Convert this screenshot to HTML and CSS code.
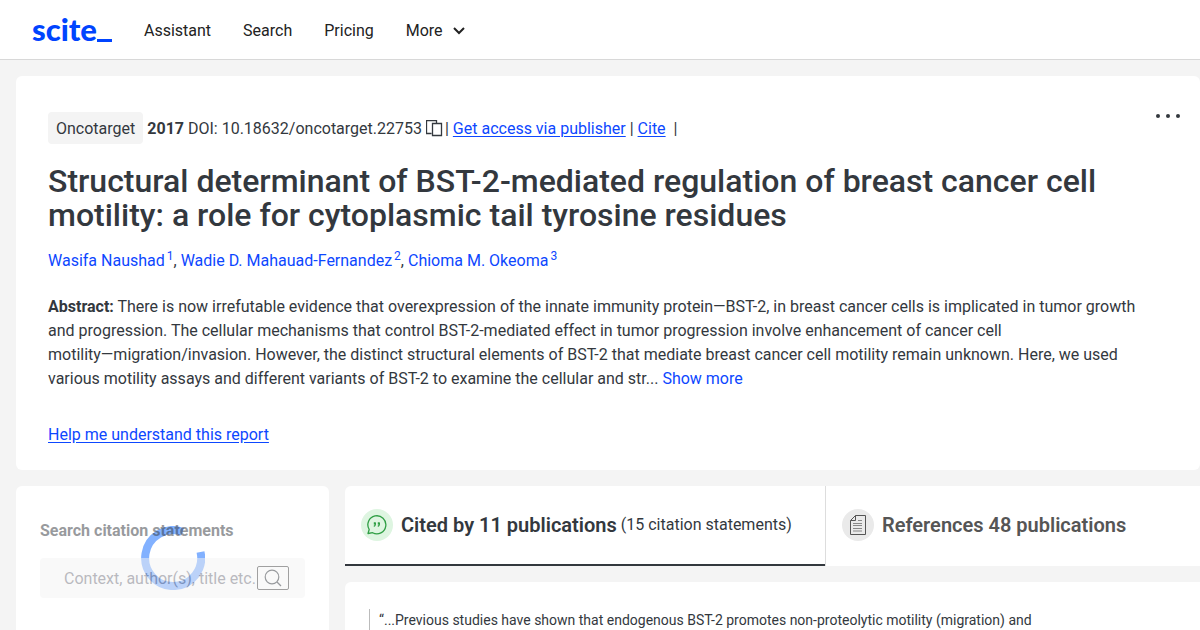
FILE: index.html
```html
<!DOCTYPE html>
<html lang="en">
<head>
  <meta charset="UTF-8">
  <meta name="viewport" content="width=device-width, initial-scale=1.0">
  <title>Structural determinant of BST-2-mediated regulation of breast cancer cell motility</title>
  <link rel="stylesheet" href="styles.css">
</head>
<body>

  <header class="header">
    <a class="logo" href="#">scite<span class="logo-bar"></span></a>
    <nav class="nav">
      <a href="#">Assistant</a>
      <a href="#">Search</a>
      <a href="#">Pricing</a>
      <button class="nav-more" type="button">
        More
        <svg width="12" height="8" viewBox="0 0 12 8" fill="none" stroke="currentColor" stroke-width="2"><path d="M1 1l5 5 5-5"/></svg>
      </button>
    </nav>
  </header>

  <main class="page">
    <section class="card paper">
      <button class="paper-menu" type="button" aria-label="More options">
        <svg width="24" height="4" viewBox="0 0 24 4" fill="currentColor"><circle cx="2" cy="2" r="2"/><circle cx="12" cy="2" r="2"/><circle cx="22" cy="2" r="2"/></svg>
      </button>

      <div class="meta">
        <span class="journal">Oncotarget</span>
        <span class="doi"><strong>2017</strong> DOI: 10.18632/oncotarget.22753</span>
        <button class="copy" type="button" aria-label="Copy DOI">
          <svg width="17" height="17" viewBox="0 0 17 17" fill="none" stroke="currentColor" stroke-width="1.3"><path d="M5.5 13.5h-5V.7h10v2M6.5 3.5h9v12h-9z"/></svg>
        </button>
        <span class="links">| <a href="#">Get access via publisher</a> | <a href="#">Cite</a></span>
        <span class="divider">|</span>
      </div>

      <h1 class="title">Structural determinant of BST-2-mediated regulation of breast cancer cell motility: a role for cytoplasmic tail tyrosine residues</h1>

      <div class="authors">
        <a href="#">Wasifa Naushad<sup>1</sup></a>, <a href="#">Wadie D. Mahauad-Fernandez<sup>2</sup></a>, <a href="#">Chioma M. Okeoma<sup>3</sup></a>
      </div>

      <p class="abstract"><strong>Abstract:</strong> There is now irrefutable evidence that overexpression of the innate immunity protein—BST-2, in breast cancer cells is implicated in tumor growth and progression. The cellular mechanisms that control BST-2-mediated effect in tumor progression involve enhancement of cancer cell <span class="nowrap">motility—migration/invasion.</span> However, the distinct structural elements of BST-2 that mediate breast cancer cell motility remain unknown. Here, we used various motility assays and different variants of BST-2 to examine the cellular and str... <a href="#">Show more</a></p>

      <a class="help" href="#">Help me understand this report</a>
    </section>

    <div class="columns">
      <aside class="card sidebar">
        <svg class="spinner" width="64" height="64" viewBox="0 0 64 64" fill="none" stroke="#82b1ff" stroke-width="8"><path d="M41.6 5.7A28 28 0 1 0 59.5 26"/></svg>
        <form class="search">
          <label for="search-input">Search citation statements</label>
          <div class="search-box">
            <input id="search-input" type="text" placeholder="Context, author(s), title etc.">
            <button type="button" aria-label="Search">
              <svg width="18" height="18" viewBox="0 0 18 18" fill="none" stroke="currentColor" stroke-width="1.2"><circle cx="8" cy="8" r="6.8"/><path d="M13 13l4 4"/></svg>
            </button>
          </div>
        </form>
      </aside>

      <div class="results">
        <div class="tabs">
          <button class="tab tab-active" type="button">
            <span class="tab-icon tab-icon-green">
              <svg width="20" height="20" viewBox="0 0 20 20" fill="none" stroke="currentColor" stroke-width="1.3">
                <path d="M1 18.5l1.2-4A9 9 0 1 1 5.6 17.7z" stroke-linejoin="round"/>
                <path d="M8.3 8v1.2q0 1.8-1.5 2.2M12.3 8v1.2q0 1.8-1.5 2.2"/>
                <path d="M6.8 7.2h2v2.2h-2zM10.8 7.2h2v2.2h-2z" fill="currentColor" stroke="none"/>
              </svg>
            </span>
            <span class="tab-title">Cited by 11 publications</span>
            <span class="tab-note">(15 citation statements)</span>
          </button>
          <button class="tab" type="button">
            <span class="tab-icon">
              <svg width="16" height="20" viewBox="0 0 16 20" fill="none" stroke="currentColor">
                <path d="M5.5.5h10v19H.5v-14zv5h-5"/>
                <path d="M8 5.5h4M3 8.5h9M3 10.5h9M3 13.5h9M3 16h9" stroke="#888"/>
              </svg>
            </span>
            <span class="tab-title">References 48 publications</span>
          </button>
        </div>

        <div class="statements">
          <blockquote class="quote">“...Previous studies have shown that endogenous BST-2 promotes non-proteolytic motility (migration) and</blockquote>
        </div>
      </div>
    </div>
  </main>

</body>
</html>
```
FILE: styles.css
```css
* {
  box-sizing: border-box;
}

body {
  display: flex;
  flex-direction: column;
  min-height: 100vh;
  margin: 0;
  background: #f4f4f4;
  color: #33383e;
  font-family: Roboto, "Liberation Sans", Arial, sans-serif;
  font-size: 16px;
  line-height: 24px;
}

button {
  padding: 0;
  border: 0;
  background: none;
  color: inherit;
  font: inherit;
  cursor: pointer;
}

a {
  color: #0d47ff;
  text-decoration: none;
}

svg {
  display: block;
}

.header {
  display: flex;
  align-items: center;
  gap: 32px;
  height: 60px;
  padding: 2px 32px 0;
  background: #fff;
  border-bottom: 1px solid #d8d8d8;
}

.logo {
  display: flex;
  align-items: flex-end;
  padding-bottom: 4px;
  color: #0044ff;
  font-family: Lato, sans-serif;
  font-size: 31px;
  font-weight: 900;
  line-height: 22px;
}

.logo-bar {
  width: 15px;
  height: 3px;
  margin-bottom: -2px;
  background: #0044ff;
}

.nav {
  display: flex;
  align-items: center;
  gap: 32px;
}

.nav a,
.nav-more {
  color: #222;
}

.nav-more {
  display: flex;
  align-items: center;
  gap: 10px;
}

.page {
  display: flex;
  flex: 1;
  flex-direction: column;
  padding: 16px 0 0 16px;
}

.card {
  background: #fff;
  border-radius: 6px;
}

.paper {
  position: relative;
  padding: 36px 32px 23px;
}

.paper-menu {
  position: absolute;
  top: 38px;
  right: 20px;
}

.meta {
  display: flex;
  align-items: center;
  height: 32px;
}

.journal,
.doi,
.links,
.divider {
  padding: 5px 0 3px;
}

.journal {
  margin-right: 4px;
  padding-left: 8px;
  padding-right: 8px;
  border-radius: 4px;
  background: #f4f4f4;
}

.copy {
  margin: 0 2px 0 4px;
}

.links {
  margin-right: 8px;
}

.links a,
.help {
  text-decoration: underline;
  text-underline-offset: 2px;
}

.title {
  margin: 20px 0 17px;
  font-size: 32px;
  font-weight: 500;
  line-height: 34px;
}

.authors sup {
  margin-left: 2px;
  font-size: 12px;
  line-height: 0;
}

.abstract {
  margin: 22px 0 32px;
  padding-right: 24px;
}

.nowrap {
  white-space: nowrap;
}

.help {
  display: inline-block;
}

.columns {
  display: flex;
  flex: 1;
  gap: 16px;
  margin-top: 16px;
}

.sidebar {
  position: relative;
  flex: 0 0 313px;
  min-width: 0;
  padding: 33px 24px 16px;
  border-radius: 6px 6px 0 0;
}

/* sits under the faded form while results load */
.spinner {
  position: absolute;
  top: 40px;
  left: 125px;
}

.search {
  position: relative;
  opacity: 0.5;
}

.search label {
  display: block;
  margin-bottom: 15px;
  font-weight: 700;
}

.search-box {
  display: flex;
  align-items: center;
  height: 40px;
  padding: 0 16px 0 24px;
  border-radius: 4px;
  background: #f4f4f4;
}

.search-box input {
  flex: 1;
  width: 0;
  min-width: 0;
  padding: 1px 0 0;
  border: 0;
  outline: 0;
  background: none;
  font: inherit;
}

.search-box input::placeholder {
  color: #757580;
}

.search-box button {
  display: flex;
  align-items: center;
  justify-content: center;
  width: 32px;
  height: 24px;
  border: 1px solid #444;
  border-radius: 2px;
}

.results {
  display: flex;
  flex: 1;
  flex-direction: column;
  min-width: 0;
}

.tabs {
  display: flex;
  height: 80px;
  border-radius: 6px 0 0 0;
  background: #fff;
}

.tab {
  display: flex;
  flex: 1;
  align-items: center;
  gap: 8px;
  padding: 0 16px 2px;
  border-left: 1px solid #ddd;
  color: #555;
  white-space: nowrap;
}

.tab-active {
  flex: 0 0 480px;
  padding-bottom: 0;
  border-bottom: 2px solid #33383e;
  border-left: 0;
  color: #33383e;
}

.tab-icon {
  display: flex;
  align-items: center;
  justify-content: center;
  width: 32px;
  height: 32px;
  border-radius: 50%;
  background: #eaeaea;
}

.tab-icon-green {
  background: #def5e1;
  color: #2f9e44;
}

.tab-title {
  font-size: 20px;
  font-weight: 600;
}

.tab-note {
  margin-left: -4px;
}

.statements {
  display: flex;
  flex: 1;
  margin-top: 16px;
  padding: 27px 24px 0;
  border-radius: 6px 0 0 0;
  background: #fff;
}

.quote {
  margin: 0;
  padding: 1px 0 0 9px;
  border-left: 1px solid #bbb;
  font-size: 14px;
  line-height: 20px;
}
```
